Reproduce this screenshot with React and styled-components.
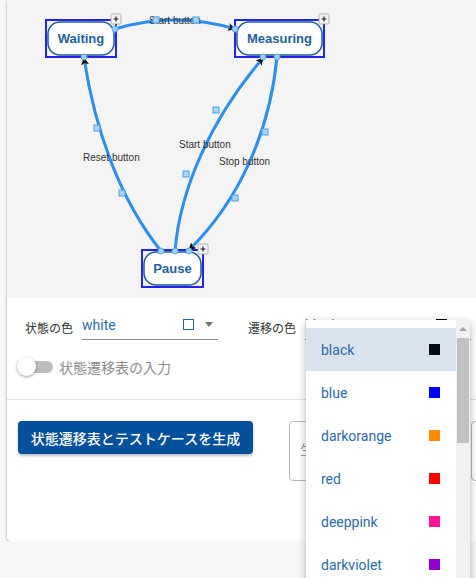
import React from 'react'
import styled, { createGlobalStyle } from 'styled-components'

const GlobalStyle = createGlobalStyle`
  html, body {
    margin: 0;
    padding: 0;
    background: #f8f8f8;
    overflow: hidden;
    font-family: Roboto, "Noto Sans CJK JP", sans-serif;
  }
`

const Card = styled.div`
  margin-left: 7px;
  width: 520px;
  height: 541px;
  background: #fff;
  box-shadow: 0 1px 3px rgba(0, 0, 0, 0.35);
  border-radius: 0 0 4px 4px;
  display: flex;
  flex-direction: column;
`

const Canvas = styled.svg`
  display: block;
  width: 469px;
  height: 298px;
  background: #f4f4f4;
  flex: none;
`

const Controls = styled.div`
  height: 102px;
  box-sizing: border-box;
  padding: 16px 0 0 11px;
  border-bottom: 1px solid #e0e0e0;
  display: flex;
  flex-direction: column;
  gap: 17px;
`

const Row = styled.div`
  display: flex;
  align-items: center;
  height: 26px;
`

const Label = styled.span`
  flex: none;
  font-size: 12px;
  color: #333;
  margin-left: ${({ $ml }) => $ml}px;
  width: 50px;
  font-family: "Noto Sans CJK JP", sans-serif;
`

const Select = styled.div`
  flex: none;
  margin-left: 7px;
  width: ${({ $w }) => $w}px;
  height: 25px;
  box-sizing: border-box;
  border-bottom: 1px solid #8a8a8a;
  display: flex;
  align-items: center;
  font-size: 14px;
  color: #2d6aa8;
  padding-bottom: 4px;
`

const SelectText = styled.span`
  flex: 1;
`

const Swatch = styled.span`
  flex: none;
  display: inline-block;
  width: 11px;
  height: 11px;
  box-sizing: border-box;
  background: ${({ $fill }) => $fill || 'transparent'};
  border: ${({ $outline }) => ($outline ? '1.5px solid #1f62b8' : 'none')};
`

const Caret = styled.span`
  width: 0;
  height: 0;
  margin: 0 5px 0 11px;
  border-left: 4.5px solid transparent;
  border-right: 4.5px solid transparent;
  border-top: 5px solid #757575;
`

const SwitchRow = styled.label`
  display: flex;
  align-items: center;
  gap: 6px;
  font-size: 14px;
  color: #8c8c8c;
  font-family: "Noto Sans CJK JP", sans-serif;
`

const Track = styled.span`
  position: relative;
  width: 33px;
  height: 12px;
  margin-left: 2px;
  border-radius: 6px;
  background: #bdbdbd;
`

const Thumb = styled.span`
  position: absolute;
  left: -3px;
  top: -4px;
  width: 19px;
  height: 19px;
  border-radius: 50%;
  background: #fff;
  box-shadow: 0 1px 3px rgba(0, 0, 0, 0.4);
`

const Actions = styled.div`
  padding: 21px 0 0 11px;
  display: flex;
  align-items: flex-start;
`

const Button = styled.button`
  flex: none;
  width: 235px;
  height: 33px;
  padding: 0;
  border: none;
  border-radius: 4px;
  background: #05509d;
  color: #fff;
  font-size: 14px;
  font-weight: 500;
  font-family: "Noto Sans CJK JP", sans-serif;
  white-space: nowrap;
  box-shadow: 0 2px 3px rgba(0, 0, 0, 0.25);
`

const Field = styled.div`
  flex: none;
  margin-left: ${({ $ml }) => $ml}px;
  width: ${({ $w }) => $w}px;
  height: 60px;
  box-sizing: border-box;
  border: 1px solid #b8b8b8;
  border-radius: 4px;
  padding: 17px 10px;
  font-size: 14px;
  color: #9a9a9a;
  font-family: "Noto Sans CJK JP", sans-serif;
  white-space: nowrap;
  overflow: hidden;
`

const Menu = styled.div`
  position: fixed;
  left: 306px;
  top: 320px;
  width: 164px;
  height: 270px;
  display: flex;
  background: #fff;
  box-shadow: 0 3px 8px rgba(0, 0, 0, 0.3);
`

const List = styled.ul`
  list-style: none;
  margin: 0;
  padding: 8px 0 0;
  flex: 1;
`

const Item = styled.li`
  height: 43px;
  display: flex;
  align-items: center;
  justify-content: space-between;
  padding: 0 16px 0 15px;
  font-size: 14px;
  color: #2d6aa8;
  background: ${({ $selected }) => ($selected ? '#d8e3ef' : '#fff')};
`

const Scrollbar = styled.div`
  width: 14px;
  background: #f1f1f1;
  display: flex;
  flex-direction: column;
  align-items: center;
`

const ScrollArrow = styled.span`
  margin-top: 7px;
  width: 0;
  height: 0;
  border-left: 4px solid transparent;
  border-right: 4px solid transparent;
  border-bottom: 4px solid #a3a3a3;
`

const ScrollThumb = styled.span`
  margin-top: 7px;
  width: 12px;
  height: 105px;
  background: #c1c1c1;
`

const colors = [
  ['black', '#020b16'],
  ['blue', '#0000ff'],
  ['darkorange', '#ff8c00'],
  ['red', '#ff0000'],
  ['deeppink', '#ff1493'],
  ['darkviolet', '#9400d3'],
]

const nodes = [
  { label: 'Waiting', x: 46, y: 20, w: 70, plus: [111, 14] },
  { label: 'Measuring', x: 235, y: 20, w: 89, plus: [319, 14] },
  { label: 'Pause', x: 142, y: 250, w: 61, plus: [198, 244] },
]

const edges = [
  'M 115 29 Q 175 11 235 29',
  'M 161 251 C 120 200 95 130 84 58',
  'M 175 251 C 180 190 210 120 263 58',
  'M 277 57 C 270 130 240 200 189 250',
]

const handles = [
  [156, 20], [196, 20], [97, 128], [122, 193],
  [216, 110], [186, 174], [265, 132], [235, 198],
]

const dots = [
  [115, 29], [235, 29], [84, 57], [263, 57], [277, 57],
  [161, 251], [175, 251], [189, 251],
]

const labels = [
  ['Start button', 149, 24],
  ['Reset button', 83, 161],
  ['Start button', 179, 148],
  ['Stop button', 219, 165],
]

function Diagram() {
  return (
    <Canvas viewBox="7 0 469 298">
      <defs>
        <marker id="arrow" markerWidth="8" markerHeight="8" refX="7" refY="4" orient="auto" markerUnits="userSpaceOnUse">
          <path d="M0 0 L8 4 L0 8 L2 4 Z" fill="#111" />
        </marker>
      </defs>
      {edges.map((d, i) => (
        <path key={i} d={d} fill="none" stroke="#2d8ef0" strokeWidth="3" markerEnd="url(#arrow)" />
      ))}
      {labels.map(([t, x, y], i) => (
        <text key={i} x={x} y={y} fontSize="10" fill="#333" fontFamily="Liberation Sans, Arial, sans-serif">{t}</text>
      ))}
      {nodes.map((n) => (
        <g key={n.label}>
          <rect x={n.x} y={n.y} width={n.w} height="37" fill="none" stroke="#2424e6" strokeWidth="2" />
          <rect x={n.x + 2} y={n.y + 2} width={n.w - 4} height="33" rx="12" fill="#fff" stroke="#1e5a96" strokeWidth="1.5" />
          <text x={n.x + n.w / 2} y={n.y + 23} textAnchor="middle" fontSize="13" fontWeight="bold" fill="#1f5f9e" fontFamily="Liberation Sans, Arial, sans-serif">{n.label}</text>
          <rect x={n.plus[0]} y={n.plus[1]} width="10" height="10" rx="1.5" fill="#f4f4f4" stroke="#a0a0a0" strokeWidth="0.8" />
          <path d={`M ${n.plus[0] + 2.5} ${n.plus[1] + 5} h5 M ${n.plus[0] + 5} ${n.plus[1] + 2.5} v5`} stroke="#222" strokeWidth="1.2" />
        </g>
      ))}
      {dots.map(([x, y], i) => (
        <circle key={i} cx={x} cy={y} r="3" fill="#9ccff5" stroke="#5aa9e8" strokeWidth="1" />
      ))}
      {handles.map(([x, y], i) => (
        <rect key={i} x={x - 3} y={y - 3} width="6" height="6" fill="#a8d4f5" stroke="#4a9ee6" strokeWidth="1" />
      ))}
    </Canvas>
  )
}

export default function App() {
  return (
    <>
      <GlobalStyle />
      <Card>
        <Diagram />
        <Controls>
          <Row>
            <Label $ml={7}>状態の色</Label>
            <Select $w={136}>
              <SelectText>white</SelectText>
              <Swatch $outline />
              <Caret />
            </Select>
            <Label $ml={30}>遷移の色</Label>
            <Select $w={166}>
              <SelectText>black</SelectText>
              <Swatch $fill="#000" />
              <Caret />
            </Select>
          </Row>
          <SwitchRow>
            <Track>
              <Thumb />
            </Track>
            状態遷移表の入力
          </SwitchRow>
        </Controls>
        <Actions>
          <Button>状態遷移表とテストケースを生成</Button>
          <Field $ml={36} $w={175}>生成されたテストケース</Field>
          <Field $ml={7} $w={120}>登録</Field>
        </Actions>
      </Card>
      <Menu>
        <List>
          {colors.map(([name, c], i) => (
            <Item key={name} $selected={i === 0}>
              {name}
              <Swatch $fill={c} />
            </Item>
          ))}
        </List>
        <Scrollbar>
          <ScrollArrow />
          <ScrollThumb />
        </Scrollbar>
      </Menu>
    </>
  )
}
